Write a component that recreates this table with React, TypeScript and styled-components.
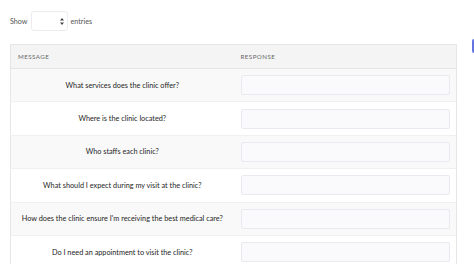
import React from "react";
import styled, { createGlobalStyle } from "styled-components";

const Global = createGlobalStyle`
  html, body { margin: 0; padding: 0; background: #fff; overflow: hidden; }
  body { font-family: "Lato", "Open Sans", sans-serif; color: #333; }
  * { box-sizing: border-box; }
`;

const Page = styled.div`
  display: flex;
  width: 520px;
`;

const Main = styled.main`
  width: 472px;
  padding: 11px 15px 0 10px;
  flex: none;
`;

const Side = styled.aside`
  flex: none;
  padding-top: 37px;
`;

const AddButton = styled.button`
  width: 40px;
  height: 14px;
  border: none;
  border-radius: 2px;
  background: #6473e0;
  padding: 0;
`;

const LengthBar = styled.div`
  display: flex;
  align-items: center;
  gap: 3px;
  height: 20px;
  font-size: 7.2px;
  color: #555;
`;

const SelectBox = styled.div`
  width: 37px;
  height: 20px;
  border: 1px solid #ececf0;
  border-radius: 3px;
  background: #fff;
  display: flex;
  align-items: center;
  justify-content: flex-end;
  padding-right: 3px;
`;

const Table = styled.table`
  margin-top: 13px;
  width: 447px;
  border-collapse: collapse;
  border: 1px solid #e6e6e6;
  table-layout: fixed;
`;

const HeadCell = styled.th`
  height: 24px;
  background: #f4f4f4;
  border-bottom: 1px solid #e4e4e4;
  text-align: left;
  padding: 0 7px;
  font-size: 6.2px;
  font-weight: 400;
  letter-spacing: 0.45px;
  text-transform: uppercase;
  color: #666;
`;

const Row = styled.tr<{ $striped: boolean }>`
  background: ${(p) => (p.$striped ? "#f9f9f9" : "#ffffff")};
  border-top: 1px solid #f0f0f0;
`;

const MessageCell = styled.td`
  text-align: center;
  font-size: 7.3px;
  color: #1e1e1e;
  padding: 0 6px;
`;

const ResponseCell = styled.td`
  padding: 6.2px 6px 6.2px 7px;
`;

const ResponseInput = styled.input`
  display: block;
  width: 100%;
  height: 20px;
  border: 1px solid #e9e9ef;
  border-radius: 2px;
  background: #fafafd;
  outline: none;
`;

const questions = [
  "What services does the clinic offer?",
  "Where is the clinic located?",
  "Who staffs each clinic?",
  "What should I expect during my visit at the clinic?",
  "How does the clinic ensure I'm receiving the best medical care?",
  "Do I need an appointment to visit the clinic?",
];

const SortArrows = () => (
  <svg width="4" height="7" viewBox="0 0 4 7">
    <path d="M2 0 L4 2.6 L0 2.6 Z M2 7 L4 4.4 L0 4.4 Z" fill="#444" />
  </svg>
);

export default function App() {
  return (
    <>
      <Global />
      <Page>
        <Main>
          <LengthBar>
            <span>Show</span>
            <SelectBox>
              <SortArrows />
            </SelectBox>
            <span>entries</span>
          </LengthBar>
          <Table>
            <thead>
              <tr>
                <HeadCell>Message</HeadCell>
                <HeadCell>Response</HeadCell>
              </tr>
            </thead>
            <tbody>
              {questions.map((q, i) => (
                <Row key={q} $striped={i % 2 === 0}>
                  <MessageCell>{q}</MessageCell>
                  <ResponseCell>
                    <ResponseInput type="text" aria-label={q} />
                  </ResponseCell>
                </Row>
              ))}
            </tbody>
          </Table>
        </Main>
        <Side>
          <AddButton aria-label="Add" />
        </Side>
      </Page>
    </>
  );
}
